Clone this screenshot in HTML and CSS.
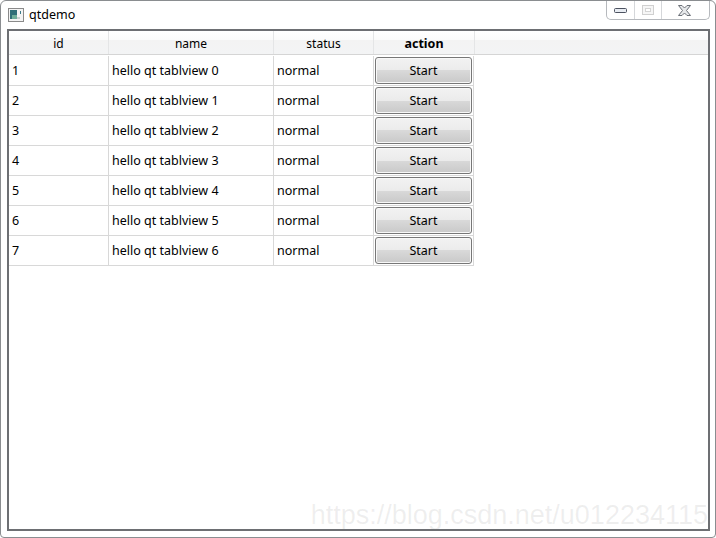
FILE: index.html
```html
<!DOCTYPE html>
<html lang="en">
<head>
    <meta charset="UTF-8">
    <title>qtdemo</title>
    <link rel="stylesheet" href="styles.css">
</head>
<body>
    <div class="window">
        <div class="titlebar">
            <svg class="app-icon" width="16" height="14" viewBox="0 0 16 14">
                <rect x="0.5" y="0.5" width="15" height="13" fill="#f4f4f4" stroke="#8a8a8a"/>
                <rect x="2" y="2" width="7" height="9" fill="#2f6f78"/>
                <rect x="4" y="7" width="5" height="4" fill="#6fae9a"/>
                <rect x="9" y="9" width="3" height="2" fill="#c8d0d0"/>
                <rect x="12" y="3" width="1" height="3" fill="#3a7a8a"/>
            </svg>
            <span class="title">qtdemo</span>
            <div class="controls">
                <div class="control min"><svg width="13" height="7" viewBox="0 0 13 7"><rect x="0.5" y="1.5" width="12" height="4" rx="1" fill="#e8ecf2" stroke="#4c5260"/></svg></div>
                <div class="control max"><svg width="12" height="10" viewBox="0 0 12 10"><rect x="0.5" y="0.5" width="11" height="9" fill="#f6f6f6" stroke="#d0d0d0"/><rect x="3.5" y="3.5" width="5" height="3" fill="#fff" stroke="#d4d4d4"/></svg></div>
                <div class="control close"><svg width="13" height="11" viewBox="0 0 13 11"><path d="M0.5 0.5H4L6.5 3 9 0.5H12.5L8.5 5.5 12.5 10.5H9L6.5 8 4 10.5H0.5L4.5 5.5Z" fill="#e6e8ea" stroke="#6c7178"/></svg></div>
            </div>
        </div>
        <div class="frame">
            <div class="row head">
                <div class="hcell">id</div>
                <div class="hcell">name</div>
                <div class="hcell">status</div>
                <div class="hcell bold">action</div>
            </div>
            <div class="row"><div class="cell">1</div><div class="cell">hello qt tablview 0</div><div class="cell">normal</div><div class="cell btn-cell"><button>Start</button></div></div>
            <div class="row"><div class="cell">2</div><div class="cell">hello qt tablview 1</div><div class="cell">normal</div><div class="cell btn-cell"><button>Start</button></div></div>
            <div class="row"><div class="cell">3</div><div class="cell">hello qt tablview 2</div><div class="cell">normal</div><div class="cell btn-cell"><button>Start</button></div></div>
            <div class="row"><div class="cell">4</div><div class="cell">hello qt tablview 3</div><div class="cell">normal</div><div class="cell btn-cell"><button>Start</button></div></div>
            <div class="row"><div class="cell">5</div><div class="cell">hello qt tablview 4</div><div class="cell">normal</div><div class="cell btn-cell"><button>Start</button></div></div>
            <div class="row"><div class="cell">6</div><div class="cell">hello qt tablview 5</div><div class="cell">normal</div><div class="cell btn-cell"><button>Start</button></div></div>
            <div class="row"><div class="cell">7</div><div class="cell">hello qt tablview 6</div><div class="cell">normal</div><div class="cell btn-cell"><button>Start</button></div></div>
        </div>
        <div class="watermark">https://blog.csdn.net/u012234115</div>
    </div>
</body>
</html>
```

FILE: styles.css
```css
html, body {
    margin: 0;
    height: 100%;
    overflow: hidden;
    background: #fff;
}

body {
    font-family: "Noto Sans", sans-serif;
    font-size: 12.5px;
    color: #000;
}

.window {
    position: relative;
    box-sizing: border-box;
    height: 538px;
    padding: 0 5px 6px 6px;
    border: 1px solid #8a8d90;
    border-radius: 6px 6px 4px 4px;
    display: flex;
    flex-direction: column;
}

.titlebar {
    height: 28px;
    display: flex;
    align-items: center;
    flex-shrink: 0;
}

.app-icon {
    margin: 0 5px 0 1px;
}

.title {
    margin-bottom: 1px;
}

.controls {
    display: flex;
    align-self: flex-start;
    margin-left: auto;
    height: 18px;
    border: 1px solid #b6b9bd;
    border-top: none;
    border-radius: 0 0 5px 5px;
}

.control {
    display: flex;
    align-items: center;
    justify-content: center;
    border-left: 1px solid #d5d7da;
}

.control:first-child {
    border-left: none;
}

.min {
    width: 27px;
}

.max {
    width: 26px;
}

.close {
    width: 48px;
    padding-right: 2px;
    box-sizing: border-box;
}

.frame {
    flex: 1;
    border: 2px solid #6d6f73;
    background: #fff;
}

.row {
    display: grid;
    grid-template-columns: 100px 165px 100px 100px;
    width: 465px;
    height: 30px;
    box-sizing: border-box;
    border-bottom: 1px solid #d8d8d8;
}

.head {
    height: 24px;
    width: auto;
    grid-template-columns: 100px 165px 100px 101px;
    font-size: 12px;
    border-bottom: 1px solid #d5d5d5;
    background: linear-gradient(180deg, #ffffff 0, #fbfbfb 40%, #f3f3f3 40%, #f3f4f5 100%);
}

.hcell {
    display: flex;
    align-items: center;
    justify-content: center;
    padding-top: 2px;
    border-right: 1px solid #e4e5e6;
}

.bold {
    font-weight: bold;
    font-size: 12.5px;
}

.cell {
    display: flex;
    align-items: center;
    padding-left: 3px;
    border-right: 1px solid #d8d8d8;
}

.btn-cell {
    padding: 1px;
    align-items: stretch;
}

.head + .row {
    height: 31px;
    padding-top: 1px;
}

button {
    flex: 1;
    margin: 0;
    padding: 0;
    font: inherit;
    color: #000;
    border: 1px solid #777;
    border-radius: 3px;
    background: linear-gradient(180deg, #f2f2f2 0, #ebebeb 50%, #d9d9d9 50%, #c9c9c9 100%);
    box-shadow: inset 0 0 0 1px #f8f8f8;
}

.watermark {
    position: absolute;
    right: 7px;
    bottom: 6px;
    font-family: "Liberation Sans", sans-serif;
    font-size: 27px;
    line-height: 32px;
    color: rgba(120, 120, 120, 0.12);
    white-space: nowrap;
}
```
